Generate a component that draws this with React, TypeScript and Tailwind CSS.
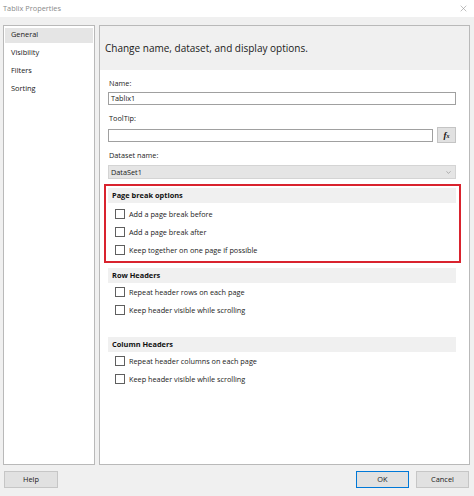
import React, { useState } from 'react';

const FONT = { fontFamily: '"Open Sans", "Noto Sans", sans-serif' };

function Check({ label }: { label: string }) {
  const [on, setOn] = useState(false);
  return (
    <label className="h-[18px] flex items-center pl-[7px] gap-[4px] cursor-default">
      <span
        onClick={() => setOn(!on)}
        className="w-[10px] h-[10px] border border-[#5f5f5f] bg-white flex items-center justify-center"
      >
        {on && (
          <svg viewBox="0 0 10 10" className="w-[8px] h-[8px]">
            <path d="M1.5 5l2.5 2.5 4.5-5" fill="none" stroke="#222" strokeWidth={1.2} />
          </svg>
        )}
      </span>
      <span className="text-[7.3px] text-[#1a1a1a]">{label}</span>
    </label>
  );
}

function SectionHeader({ title }: { title: string }) {
  return (
    <div className="h-[15px] bg-[#f0f0f0] flex items-center pl-[4px] text-[7.4px] font-bold text-[#111]">
      {title}
    </div>
  );
}

export default function App() {
  const [tab, setTab] = useState('General');
  const tabs = ['General', 'Visibility', 'Filters', 'Sorting'];

  return (
    <div className="w-[474px] h-[496px] bg-[#f0f0f0] flex flex-col overflow-hidden" style={FONT}>
      {/* Title bar */}
      <div className="h-[17px] bg-white flex items-center justify-between pl-[3px] pr-[7px]">
        <span className="text-[7.4px] text-[#8a8a8a]">Tablix Properties</span>
        <svg viewBox="0 0 10 10" className="w-[7px] h-[7px]">
          <path d="M1 1l8 8M9 1l-8 8" stroke="#9a9a9a" strokeWidth={0.9} />
        </svg>
      </div>

      {/* Main */}
      <div className="flex-1 flex gap-[4px] pl-[3px] pr-[4px] pt-[8px] pb-[6px]">
        {/* Left nav */}
        <div className="w-[92px] bg-white border border-[#b9b9b9] px-[1px]">
          {tabs.map((t) => (
            <div key={t} onClick={() => setTab(t)} className="h-[18px] py-[1.5px]">
              <div
                className={`h-full flex items-center pl-[6px] text-[7.4px] text-[#1a1a1a] ${
                  tab === t ? 'bg-[#e5e5e5]' : ''
                }`}
              >
                {t}
              </div>
            </div>
          ))}
        </div>

        {/* Right panel */}
        <div className="flex-1 bg-white border border-[#b9b9b9] flex flex-col">
          <div className="h-[44px] bg-[#f0f0f0] flex items-center pl-[5px] text-[10px] text-[#1a1a1a]">
            Change name, dataset, and display options.
          </div>

          <div className="pl-[8px] pr-[13px] pt-[8px] text-[7.3px] text-[#1a1a1a]">
            <div className="h-[10px] leading-[10px] pl-[1px]">Name:</div>
            <div className="mt-[4px] h-[13px] border border-[#a0a0a0] bg-white flex items-center pl-[2px]">
              Tablix1
            </div>

            <div className="mt-[8px] h-[10px] leading-[10px] pl-[1px]">ToolTip:</div>
            <div className="mt-[4px] h-[16px] flex items-center gap-[4px]">
              <div className="flex-1 h-[13px] border border-[#a0a0a0] bg-white" />
              <div className="w-[19px] h-[16px] bg-[#e1e1e1] border border-[#c4c4c4] flex items-center justify-center">
                <span
                  className="italic font-bold text-[9px] leading-none text-[#111]"
                  style={{ fontFamily: '"Liberation Serif", serif' }}
                >
                  f<span className="text-[6px]">x</span>
                </span>
              </div>
            </div>

            <div className="mt-[7px] h-[10px] leading-[10px] pl-[1px]">Dataset name:</div>
            <div className="mt-[5px] h-[14px] bg-[#e5e5e5] border border-[#d4d4d4] flex items-center justify-between pl-[2px] pr-[4px]">
              <span>DataSet1</span>
              <svg viewBox="0 0 8 5" className="w-[5px] h-[3px]">
                <path d="M0.5 0.5l3.5 3.5 3.5-3.5" fill="none" stroke="#888" strokeWidth={1} />
              </svg>
            </div>

            {/* Highlighted group */}
            <div className="mt-[5px] -ml-[4px] -mr-[5px] border-2 border-[#d9232e] pt-[2px] pb-[2px] pl-[2px] pr-[3px]">
              <SectionHeader title="Page break options" />
              <div className="mt-[2px]">
                <Check label="Add a page break before" />
                <Check label="Add a page break after" />
                <Check label="Keep together on one page if possible" />
              </div>
            </div>

            <div className="mt-[5px]">
              <SectionHeader title="Row Headers" />
              <Check label="Repeat header rows on each page" />
              <Check label="Keep header visible while scrolling" />
            </div>

            <div className="mt-[18px]">
              <SectionHeader title="Column Headers" />
              <Check label="Repeat header columns on each page" />
              <Check label="Keep header visible while scrolling" />
            </div>
          </div>
        </div>
      </div>

      {/* Footer */}
      <div className="h-[17px] mb-[8px] flex items-center pl-[4px] pr-[5px] text-[7.4px] text-[#1a1a1a]">
        <button className="w-[54px] h-[17px] bg-[#e1e1e1] border border-[#c6c6c6]">Help</button>
        <div className="flex-1" />
        <button className="w-[53px] h-[17px] bg-[#e1e1e1] border border-[#0078d7]">OK</button>
        <button className="ml-[7px] w-[53px] h-[17px] bg-[#e1e1e1] border border-[#c6c6c6]">Cancel</button>
      </div>
    </div>
  );
}
